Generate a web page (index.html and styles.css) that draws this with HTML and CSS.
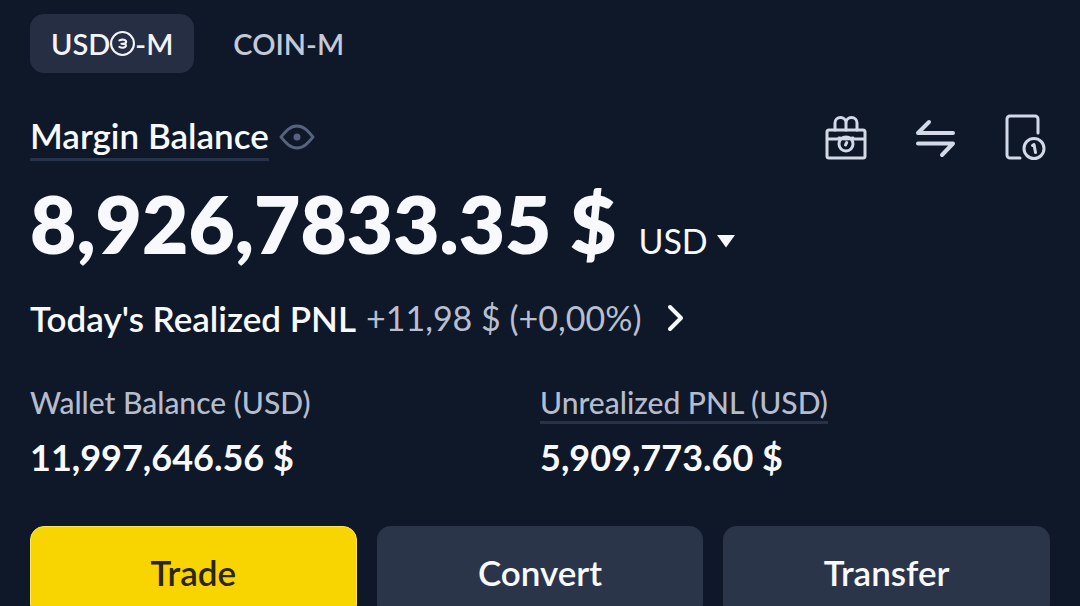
FILE: index.html
```html
<!DOCTYPE html>
<html lang="en">
<head>
<meta charset="utf-8">
<meta name="viewport" content="width=device-width, initial-scale=1">
<title>Futures wallet</title>
<link rel="stylesheet" href="styles.css">
</head>
<body>
<main class="wallet">
  <nav class="tabs" aria-label="Margin type">
    <button class="tab tab-active" type="button"><span>USD</span><svg class="coin" viewBox="0 0 24 24" aria-hidden="true"><circle cx="12" cy="12" r="11"/><path d="M9 9c3-1.500 6.500-.5 6.500 1.500 0 1.500-1.500 1.800-4.500 1.800 3.500 0 4.800.8 4.300 2.200-.7 1.700-4 2-6.300.8"/></svg><span>-M</span></button>
    <button class="tab" type="button">COIN-M</button>
  </nav>

  <header class="head">
    <div class="head-title">
      <h1 class="title">Margin Balance</h1>
      <button class="icon-button" type="button" aria-label="Hide balance">
        <svg class="eye" viewBox="0 0 36 28" aria-hidden="true"><path d="M2 14C7 8 11 3 18 3s11 5 16 11c-5 6-9 11-16 11S7 20 2 14Z"/><circle cx="18" cy="14" r="3.500"/></svg>
      </button>
    </div>
    <div class="tools">
      <button class="icon-button" type="button" aria-label="Rewards">
        <svg class="tool" viewBox="0 0 48 48" aria-hidden="true"><rect x="5" y="17" width="38" height="28" rx="2"/><path d="M6 26h11M31 26h11M13 17V10a5.500 5.500 0 0 1 11 0v7M24 17V10a5.500 5.500 0 0 1 11 0v7"/><circle cx="24" cy="31" r="7"/><path d="M17 25c4 1 10 1 14 0"/><path d="M23.500 32l1.200-2.500"/></svg>
      </button>
      <button class="icon-button" type="button" aria-label="Exchange">
        <svg class="tool" viewBox="0 0 48 48" aria-hidden="true"><path class="arrows" d="M41 20H6L17 9M6 30.500h35L30 42"/></svg>
      </button>
      <button class="icon-button" type="button" aria-label="History">
        <svg class="tool" viewBox="0 0 48 48" aria-hidden="true"><path d="M18 45H8a3 3 0 0 1-3-3V6a3 3 0 0 1 3-3h25a3 3 0 0 1 3 3v14"/><circle cx="32" cy="35.500" r="10"/><path d="M30.500 32.500l1.500-1 1.500 8"/></svg>
      </button>
    </div>
  </header>

  <section class="balance">
    <span class="amount">8,926,7833.35 $</span>
    <button class="currency" type="button">USD<svg class="caret" viewBox="0 0 20 13" aria-hidden="true"><path d="M1 0h18L10 12.500Z"/></svg></button>
  </section>

  <a class="pnl" href="#pnl">
    <span class="pnl-label">Today's Realized PNL</span>
    <span class="pnl-value">+11,98 $ (+0,00%)</span>
    <svg class="chevron" viewBox="0 0 18 28" aria-hidden="true"><path d="M3 3l11 11L3 25"/></svg>
  </a>

  <dl class="stats">
    <div class="stat">
      <dt class="stat-label">Wallet Balance (USD)</dt>
      <dd class="stat-value">11,997,646.56 $</dd>
    </div>
    <div class="stat">
      <dt class="stat-label stat-underlined">Unrealized PNL (USD)</dt>
      <dd class="stat-value">5,909,773.60 $</dd>
    </div>
  </dl>

  <div class="actions">
    <button class="action action-primary" type="button">Trade</button>
    <button class="action" type="button">Convert</button>
    <button class="action" type="button">Transfer</button>
  </div>
</main>
</body>
</html>
```
FILE: styles.css
```css
* {
  box-sizing: border-box;
}

html {
  background: #0e1828;
  scrollbar-width: none;
}

body {
  margin: 0;
  color: #f8f9fc;
  font-family: Lato, "Open Sans", sans-serif;
}

button {
  border: 0;
  padding: 0;
  background: none;
  color: inherit;
  font: inherit;
  cursor: pointer;
}

svg {
  display: block;
  fill: none;
  stroke: currentColor;
  stroke-linecap: round;
  stroke-linejoin: round;
}

.wallet {
  display: flex;
  flex-direction: column;
  padding: 14px 30px 0;
}

.tabs {
  display: flex;
  gap: 18px;
}

.tab {
  display: flex;
  align-items: center;
  height: 59px;
  padding: 0 21px;
  border-radius: 14px;
  color: #c3c9d8;
  font-size: 29px;
  font-weight: 600;
}

.tab-active {
  background: #252e43;
  color: #f2f4f9;
}

.coin {
  width: 25px;
  height: 25px;
  stroke-width: 2;
}

.head {
  display: flex;
  align-items: center;
  justify-content: space-between;
  margin-top: 39px;
}

.head-title {
  display: flex;
  align-items: center;
  gap: 10px;
}

.title {
  margin: 0;
  border-bottom: 3px solid #27334a;
  font-size: 35px;
  font-weight: 600;
  line-height: 46px;
}

.icon-button {
  color: #d3d9e7;
}

.eye {
  width: 36px;
  height: 28px;
  color: #56637e;
  stroke-width: 3;
}

.eye circle {
  fill: currentColor;
  stroke: none;
}

.tools {
  display: flex;
  gap: 42px;
}

.tool {
  width: 48px;
  height: 48px;
  stroke-width: 3;
}

.tool .arrows {
  stroke-width: 4;
}

.balance {
  display: flex;
  align-items: baseline;
  gap: 22px;
  margin-top: 14px;
  line-height: 96px;
}

.amount {
  font-size: 80px;
  font-weight: 800;
}

.currency {
  display: flex;
  align-items: center;
  gap: 8px;
  font-size: 34px;
  line-height: 40px;
}

.caret {
  width: 20px;
  height: 13px;
  fill: currentColor;
  stroke: none;
}

.pnl {
  display: flex;
  align-items: center;
  align-self: flex-start;
  gap: 10px;
  margin-top: 26px;
  color: inherit;
  font-size: 35px;
  line-height: 42px;
  text-decoration: none;
}

.pnl-label {
  font-weight: 600;
}

.pnl-value {
  color: #b7bfd0;
  font-size: 34px;
}

.chevron {
  width: 18px;
  height: 28px;
  margin-left: 16px;
  stroke-width: 4;
}

.stats {
  display: grid;
  grid-template-columns: 1fr 1fr;
  margin: 44px 0 0;
}

.stat {
  display: flex;
  flex-direction: column;
  align-items: flex-start;
  gap: 12px;
}

.stat-label {
  border-bottom: 3px solid transparent;
  color: #b4bccd;
  font-size: 30px;
  font-weight: 500;
  line-height: 38px;
}

.stat-underlined {
  border-color: #27334a;
}

.stat-value {
  margin: 0;
  font-size: 36px;
  font-weight: 700;
  line-height: 42px;
}

.actions {
  display: grid;
  grid-template-columns: repeat(3, 1fr);
  gap: 20px;
  margin-top: 48px;
}

.action {
  height: 92px;
  border-radius: 14px;
  background: #2b354a;
  font-size: 35px;
  font-weight: 600;
}

.action-primary {
  border: 1px solid #fce75a;
  background: #f8d400;
  color: #2b2618;
}
```
